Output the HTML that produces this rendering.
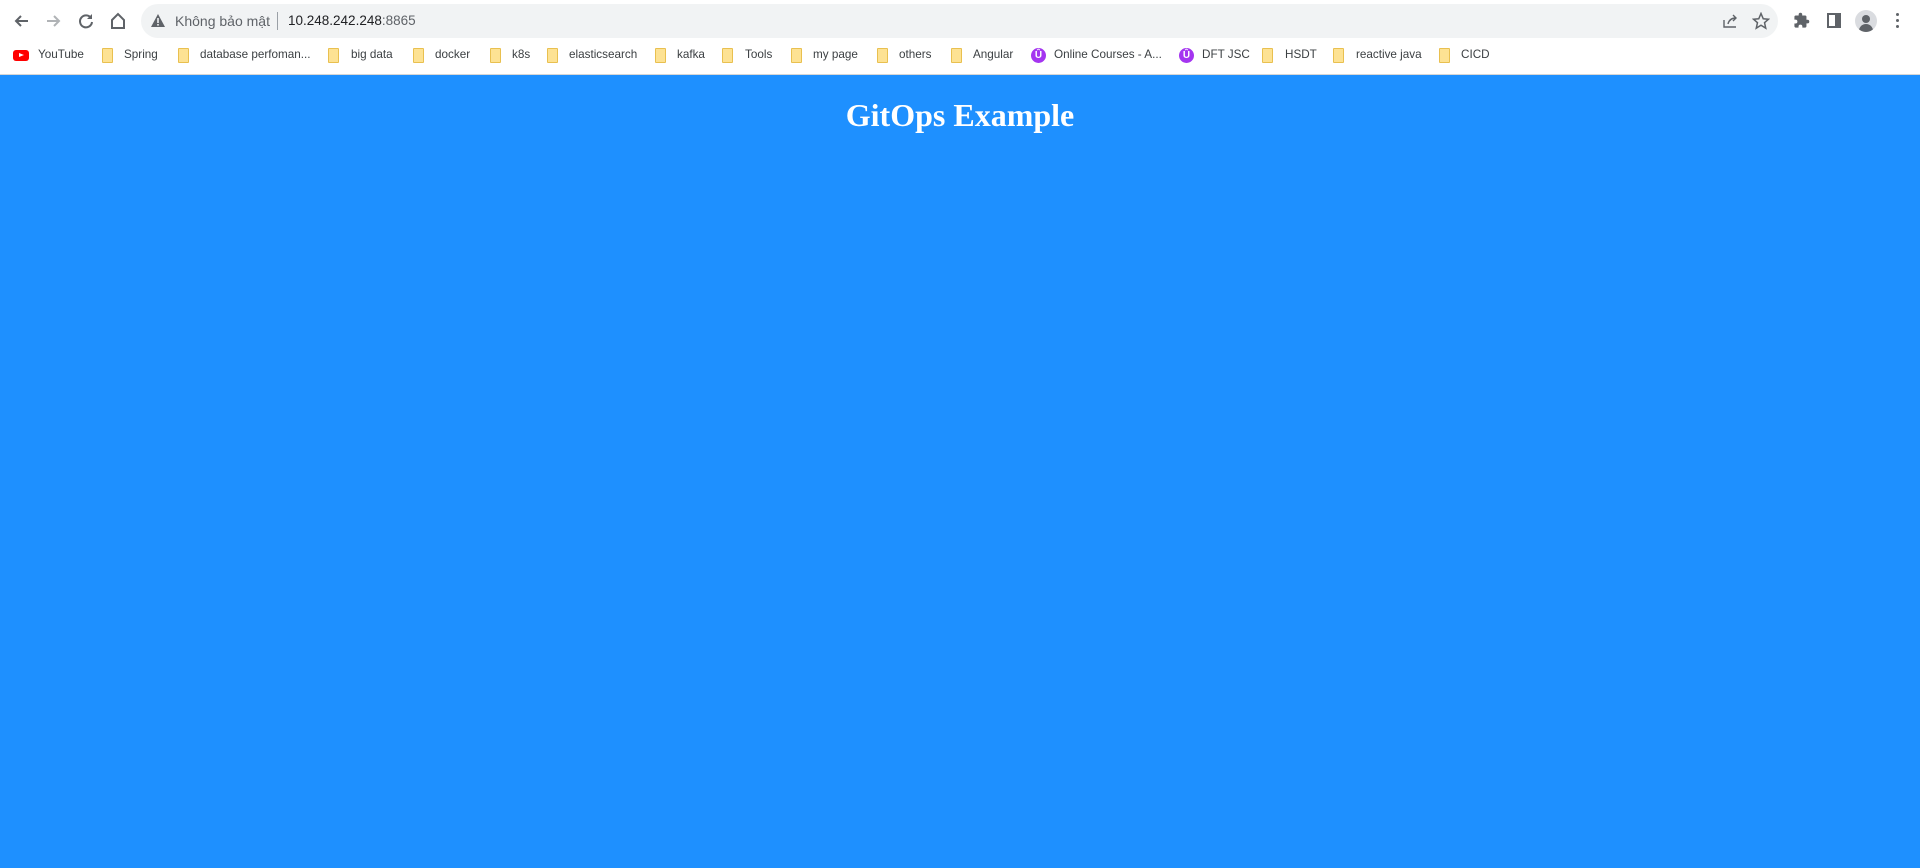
<!DOCTYPE html>
<html><head><meta charset="utf-8"><style>
*{margin:0;padding:0;box-sizing:border-box}
html,body{width:1920px;height:868px;overflow:hidden;background:#1e90ff;font-family:"Liberation Sans",sans-serif}
#chrome{position:absolute;left:0;top:0;width:1920px;height:75px;background:#fff;border-bottom:1px solid #d6d6d6}
.abs{position:absolute}
#omni{position:absolute;left:141px;top:4px;width:1637px;height:34px;border-radius:17px;background:#f1f3f4}
.bm{position:absolute;top:48px;font-size:11.7px;color:#3c4043;line-height:14px;white-space:nowrap}
.fold{position:absolute;top:48px;width:11px;height:15px;background:#fde293;border:1px solid #e9c04f;border-radius:1px}
.ud{position:absolute;top:48px;width:15px;height:15px;border-radius:50%;background:#a435f0;color:#fff;font-size:10px;font-weight:bold;text-align:center;line-height:15px}
h1{position:absolute;left:0;width:1920px;top:97px;text-align:center;color:#fff;font-family:"Liberation Serif",serif;font-size:32px;font-weight:bold}
</style></head><body>
<div id="chrome">
<svg class="abs" style="left:12px;top:11px" width="20" height="20" viewBox="0 0 20 20"><path d="M16 10H4M9 5L4 10l5 5" stroke="#5f6368" stroke-width="2" fill="none"/></svg>
<svg class="abs" style="left:43px;top:11px" width="20" height="20" viewBox="0 0 20 20"><path d="M4 10h12M11 5l5 5-5 5" stroke="#b0b3b6" stroke-width="2" fill="none"/></svg>
<svg class="abs" style="left:76px;top:11px" width="20" height="20" viewBox="0 0 20 20"><path d="M15 7A6 6 0 1 0 16 11" stroke="#5f6368" stroke-width="2" fill="none"/><path d="M16 3v5h-5z" fill="#5f6368"/></svg>
<svg class="abs" style="left:108px;top:11px" width="20" height="20" viewBox="0 0 20 20"><path d="M4 9l6-6 6 6v8H4z" stroke="#5f6368" stroke-width="2" fill="none"/></svg>
<div id="omni"></div>
<svg class="abs" style="left:151px;top:14px" width="14" height="13" viewBox="0 0 14 13"><path d="M7 0L14 13H0z" fill="#5f6368"/><rect x="6.2" y="4" width="1.6" height="5" fill="#f1f3f4"/><rect x="6.2" y="10" width="1.6" height="1.6" fill="#f1f3f4"/></svg>
<div class="abs" style="left:175px;top:13px;font-size:14px;color:#5f6368">Không bảo mật</div>
<div class="abs" style="left:277px;top:12px;width:1px;height:18px;background:#9aa0a6"></div>
<div class="abs" style="left:288px;top:13px;font-size:13.5px;color:#202124">10.248.242.248<span style="color:#5f6368">:8865</span></div>
<svg class="abs" style="left:1722px;top:12px" width="18" height="18" viewBox="0 0 18 18"><path d="M2 8v7h12M6 12c1-4 4-6 8-6M11 3l3 3-3 3" stroke="#5f6368" stroke-width="1.4" fill="none"/></svg>
<svg class="abs" style="left:1752px;top:12px" width="18" height="18" viewBox="0 0 24 24"><path d="M12 2l3 7 7 .6-5.3 4.6 1.6 7.3L12 17.6 5.7 21.5l1.6-7.3L2 9.6 9 9z" stroke="#5f6368" stroke-width="2" fill="none"/></svg>
<svg class="abs" style="left:1793px;top:12px" width="17" height="17" viewBox="0 0 24 24"><path d="M20.5 11H19V7a2 2 0 0 0-2-2h-4V3.5a2.5 2.5 0 0 0-5 0V5H4a2 2 0 0 0-2 2v3.8h1.5a2.7 2.7 0 0 1 0 5.4H2V20a2 2 0 0 0 2 2h3.8v-1.5a2.7 2.7 0 0 1 5.4 0V22H17a2 2 0 0 0 2-2v-4h1.5a2.5 2.5 0 0 0 0-5z" fill="#5f6368"/></svg>
<div class="abs" style="left:1827px;top:13px;width:14px;height:15px;border:2px solid #5f6368;border-right:6px solid #5f6368"></div>
<div class="abs" style="left:1855px;top:10px;width:22px;height:22px;border-radius:50%;background:#dadce0;overflow:hidden"><div class="abs" style="left:7px;top:5px;width:8px;height:8px;border-radius:50%;background:#5f6368"></div><div class="abs" style="left:4px;top:14px;width:14px;height:8px;border-radius:7px 7px 0 0;background:#5f6368"></div></div>
<div class="abs" style="left:1896px;top:13px;width:3px;height:3px;border-radius:50%;background:#5f6368;box-shadow:0 6px 0 #5f6368,0 12px 0 #5f6368"></div>
<div class="abs" style="left:13px;top:50px;width:16px;height:11px;border-radius:3px;background:#f00"><div class="abs" style="left:6px;top:3px;border-left:5px solid #fff;border-top:2.5px solid transparent;border-bottom:2.5px solid transparent"></div></div>
<div class="bm" style="left:38px">YouTube</div>
<div class="fold" style="left:102px"></div><div class="bm" style="left:124px">Spring</div>
<div class="fold" style="left:178px"></div><div class="bm" style="left:200px">database perfoman...</div>
<div class="fold" style="left:328px"></div><div class="bm" style="left:351px">big data</div>
<div class="fold" style="left:413px"></div><div class="bm" style="left:435px">docker</div>
<div class="fold" style="left:490px"></div><div class="bm" style="left:512px">k8s</div>
<div class="fold" style="left:547px"></div><div class="bm" style="left:569px">elasticsearch</div>
<div class="fold" style="left:655px"></div><div class="bm" style="left:677px">kafka</div>
<div class="fold" style="left:722px"></div><div class="bm" style="left:745px">Tools</div>
<div class="fold" style="left:791px"></div><div class="bm" style="left:813px">my page</div>
<div class="fold" style="left:877px"></div><div class="bm" style="left:899px">others</div>
<div class="fold" style="left:951px"></div><div class="bm" style="left:973px">Angular</div>
<div class="ud" style="left:1031px">Û</div><div class="bm" style="left:1054px">Online Courses - A...</div>
<div class="ud" style="left:1179px">Û</div><div class="bm" style="left:1202px">DFT JSC</div>
<div class="fold" style="left:1262px"></div><div class="bm" style="left:1285px">HSDT</div>
<div class="fold" style="left:1333px"></div><div class="bm" style="left:1356px">reactive java</div>
<div class="fold" style="left:1439px"></div><div class="bm" style="left:1461px">CICD</div>
</div>
<h1>GitOps Example</h1>
</body></html>
